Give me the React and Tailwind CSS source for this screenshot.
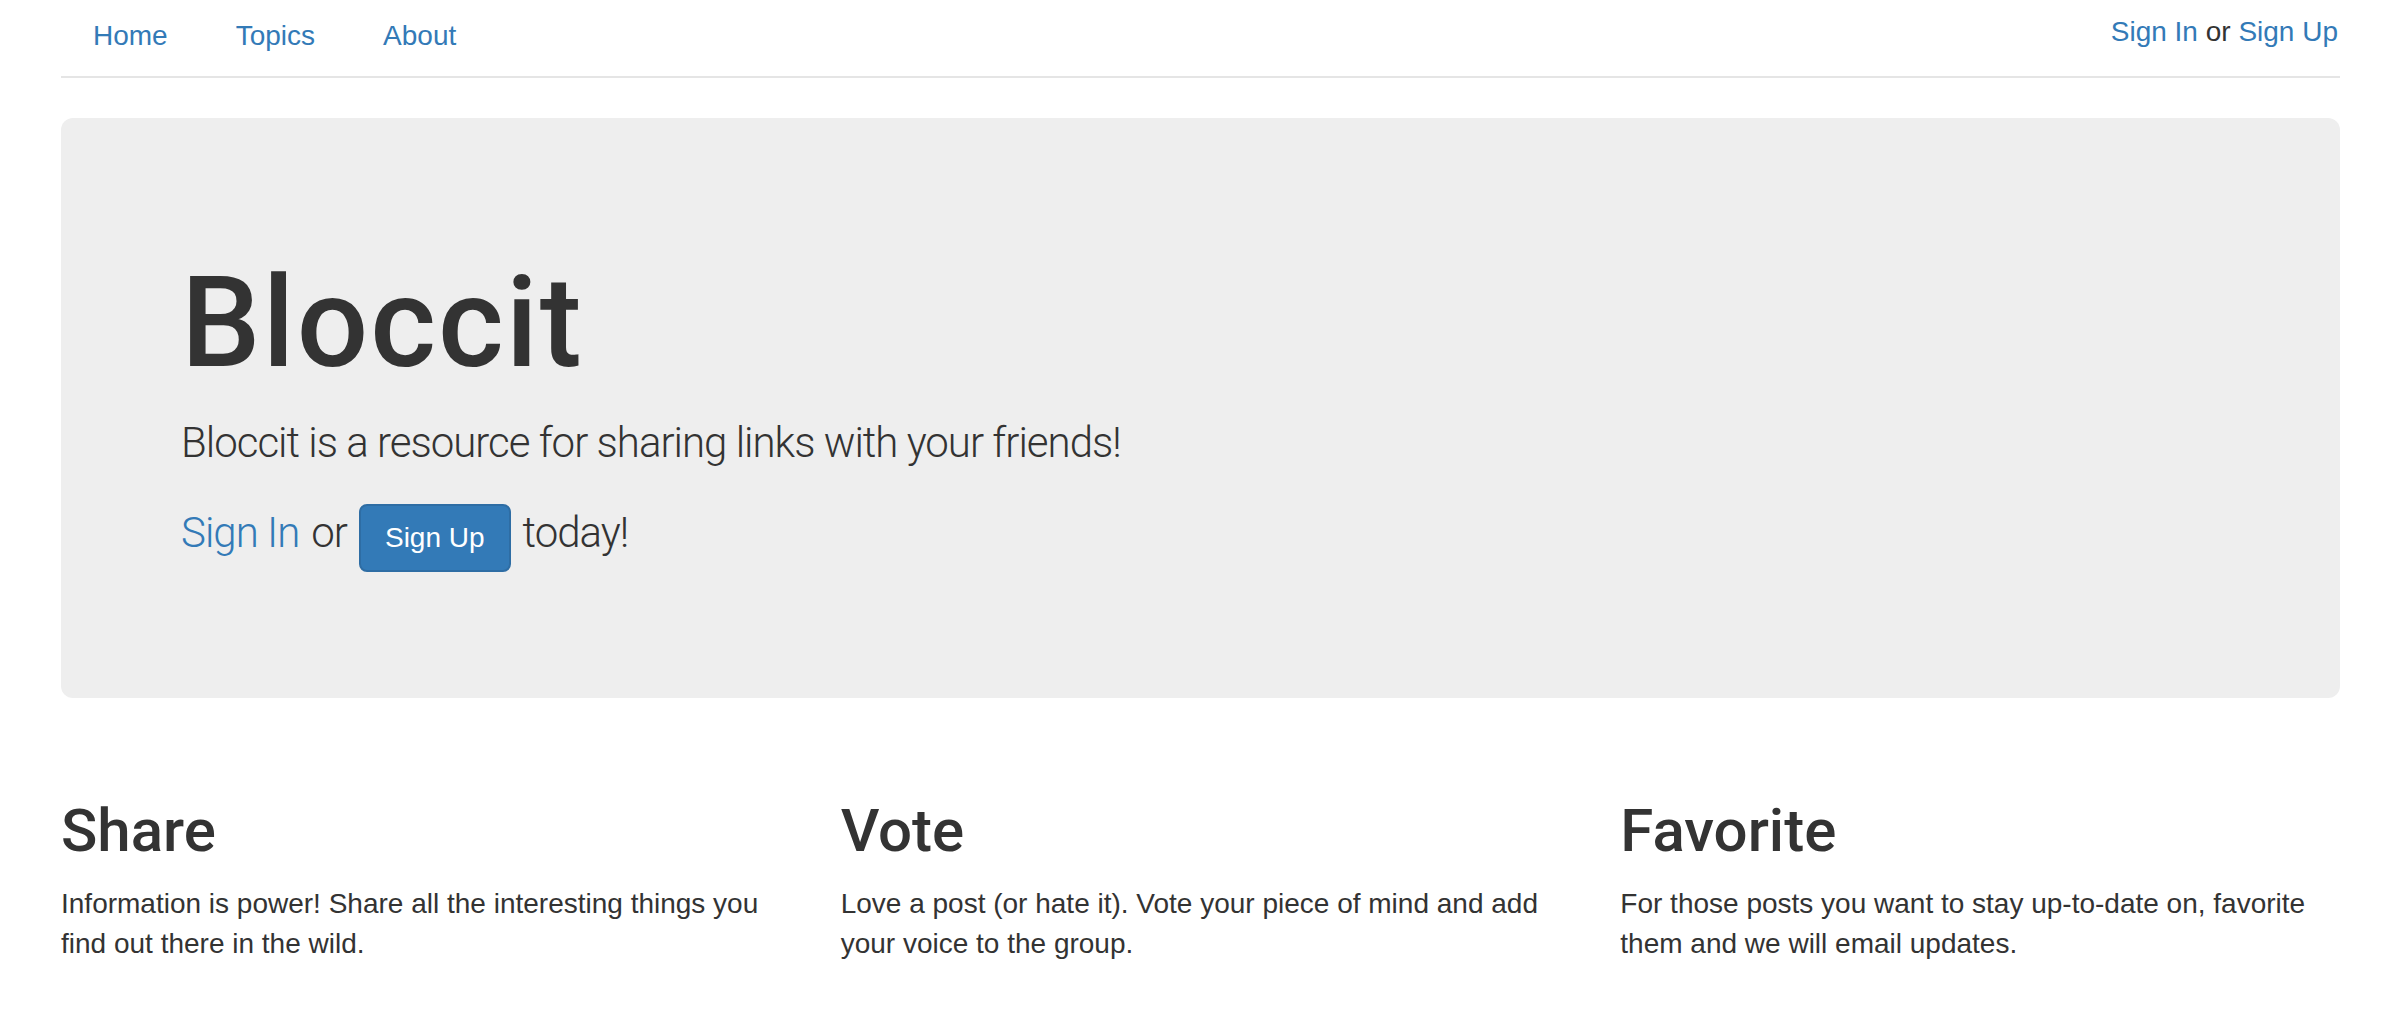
const features = [
  {
    title: "Share",
    body: "Information is power! Share all the interesting things you find out there in the wild.",
  },
  {
    title: "Vote",
    body: "Love a post (or hate it). Vote your piece of mind and add your voice to the group.",
  },
  {
    title: "Favorite",
    body: "For those posts you want to stay up-to-date on, favorite them and we will email updates.",
  },
];

const App = () => {
  return (
    <div className="min-h-screen bg-white font-['Liberation_Sans',Arial,sans-serif] text-[#333333]">
      <div className="w-[2279px] ml-[61px]">
        {/* Header */}
        <header className="h-[78px] flex justify-between border-b-2 border-[#e5e5e5]">
          <nav className="flex gap-[68px] pl-[32px] pt-[16px] text-[28px] leading-[40px]">
            <a href="#" className="text-[#337ab7]">Home</a>
            <a href="#" className="text-[#337ab7]">Topics</a>
            <a href="#" className="text-[#337ab7]">About</a>
          </nav>
          <div className="pt-[12px] pr-[2px] text-[28px] leading-[40px]">
            <a href="#" className="text-[#337ab7]">Sign In</a> or{" "}
            <a href="#" className="text-[#337ab7]">Sign Up</a>
          </div>
        </header>

        {/* Jumbotron */}
        <section className="mt-[40px] rounded-[12px] bg-[#eeeeee] px-[120px] py-[96px]">
          <h1 className="mt-[40px] mb-[20px] font-['Roboto',sans-serif] font-medium text-[126px] leading-[1.1] tracking-[2px]">
            Bloccit
          </h1>
          <p className="font-['Roboto',sans-serif] font-light text-[42px] leading-[60px] tracking-[-1px]">
            Bloccit is a resource for sharing links with your friends!
          </p>
          <div className="mt-[30px] mb-[30px] flex items-baseline gap-[12px] font-['Roboto',sans-serif] font-light text-[42px] leading-[60px] tracking-[-1px]">
            <a href="#" className="text-[#337ab7]">Sign In</a>
            <span>or</span>
            <a
              href="#"
              className="rounded-[8px] border-2 border-[#2e6da4] bg-[#337ab7] px-[24px] py-[12px] font-['Liberation_Sans',Arial,sans-serif] font-normal text-[28px] leading-[40px] tracking-normal text-white"
            >
              Sign Up
            </a>
            <span>today!</span>
          </div>
        </section>

        {/* Features */}
        <div className="mt-[100px] grid grid-cols-3 gap-x-[60px]">
          {features.map((f) => (
            <div key={f.title}>
              <h2 className="mb-[20px] font-['Roboto',sans-serif] font-medium text-[60px] leading-[66px]">
                {f.title}
              </h2>
              <p className="text-[28px] leading-[40px]">{f.body}</p>
            </div>
          ))}
        </div>
      </div>
    </div>
  );
};

export default App;
